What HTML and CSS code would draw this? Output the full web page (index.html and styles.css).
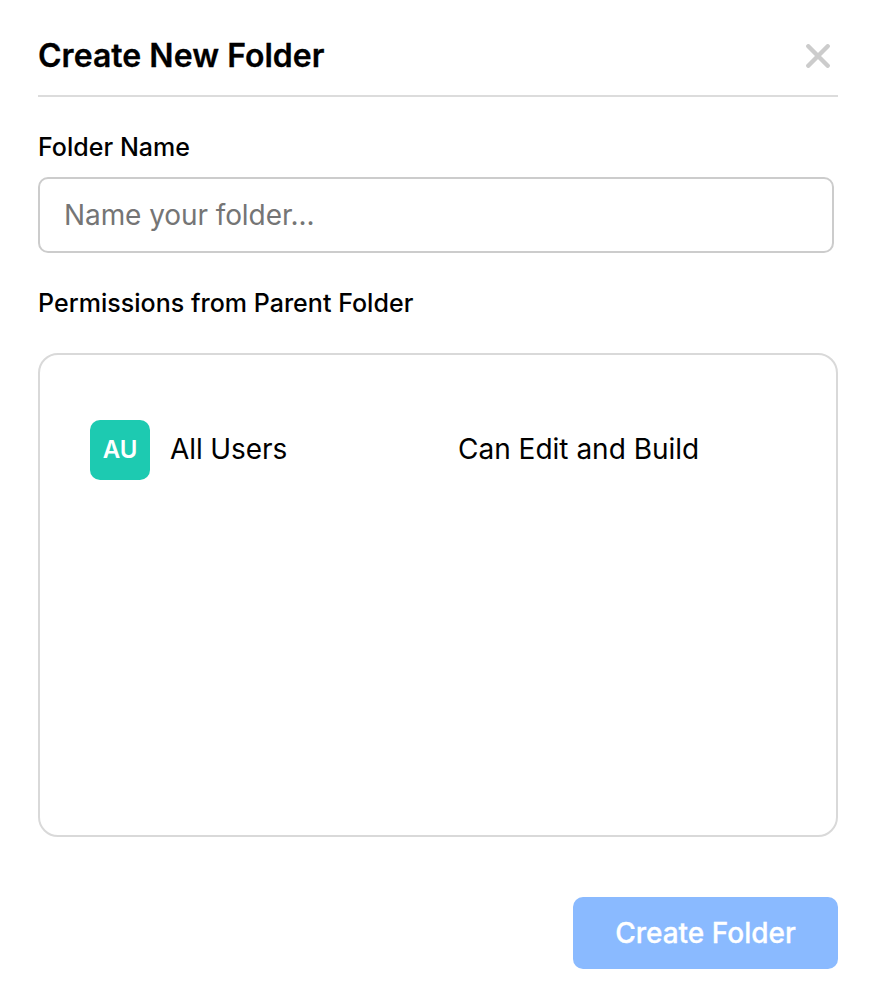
FILE: index.html
```html
<!DOCTYPE html>
<html lang="en">
<head>
<meta charset="utf-8">
<title>Create New Folder</title>
<link rel="stylesheet" href="styles.css">
</head>
<body>
<form class="dialog">
  <header class="dialog-header">
    <h1 class="title">Create New Folder</h1>
    <button class="close" type="button" aria-label="Close">
      <svg width="24" height="24" viewBox="0 0 24 24" fill="none" stroke="#cccccc" stroke-width="4.4" stroke-linecap="round"><path d="M2.3 2.3L21.7 21.7M21.7 2.3L2.3 21.7"/></svg>
    </button>
  </header>
  <label class="label" for="name">Folder Name</label>
  <input class="input" id="name" type="text" placeholder="Name your folder...">
  <h2 class="label permissions-label">Permissions from Parent Folder</h2>
  <section class="permissions">
    <div class="row">
      <span class="avatar">AU</span>
      <span class="user">All Users</span>
      <span class="access">Can Edit and Build</span>
    </div>
  </section>
  <footer class="actions">
    <button class="submit" type="button">Create Folder</button>
  </footer>
</form>
</body>
</html>
```
FILE: styles.css
```css
* { box-sizing: border-box; }
body { margin: 0; background: #fff; color: #000; font-family: Inter, sans-serif; }
.dialog { display: flex; flex-direction: column; width: 874px; height: 996px; padding: 16px 36px 0 38px; }
.dialog-header { display: flex; align-items: center; justify-content: space-between; height: 81px; padding-right: 8px; border-bottom: 2px solid #dcdcdc; }
.title { margin: 0; font-size: 32px; line-height: 40px; font-weight: 600; letter-spacing: 0.03px; -webkit-text-stroke: 0.3px #000; }
.close { display: flex; padding: 0; border: 0; background: none; }
.label { margin: 34px 0 0; font-size: 25px; line-height: 32px; font-weight: 500; letter-spacing: 0.03px; }
.input { width: 796px; height: 76px; margin-top: 14px; padding: 0 24px; border: 2px solid #ccc; border-radius: 10px; font: 400 28px/36px Inter, sans-serif; letter-spacing: -0.08px; background: #fff; }
.input::placeholder { color: #757575; opacity: 1; }
.permissions { height: 484px; margin-top: 34px; padding: 65px 50px; border: 2px solid #d9d9d9; border-radius: 20px; }
.row { display: grid; grid-template-columns: 80px 288px 1fr; align-items: center; font-size: 28px; line-height: 36px; }
.user, .access { padding-bottom: 2px; }
.user { letter-spacing: -0.1px; }
.avatar { display: grid; place-items: center; width: 60px; height: 60px; border-radius: 10px; background: #1dcab1; color: #fff; font-size: 24px; font-weight: 600; }
.actions { display: flex; justify-content: flex-end; margin-top: 60px; }
.submit { width: 265px; height: 72px; padding: 0; border: 0; border-radius: 10px; background: #8abaff; color: #fff; font: 500 28px/36px Inter, sans-serif; -webkit-text-stroke: 0.3px #fff; }
```
